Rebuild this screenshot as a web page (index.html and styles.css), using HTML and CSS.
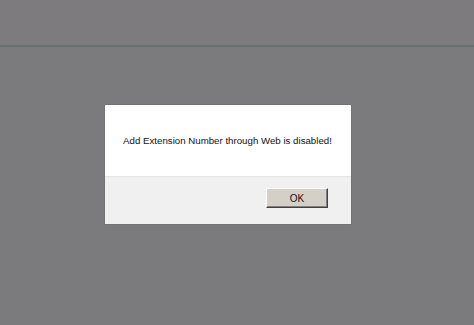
FILE: index.html
```html
<!DOCTYPE html>
<html>
<head>
<meta charset="utf-8">
<link rel="stylesheet" href="styles.css">
</head>
<body>
<div class="page">
  <div class="topbar"></div>
  <div class="content"></div>
</div>
<div class="dialog">
  <div class="dialog-body">
    <p class="message">Add Extension Number through Web is disabled!</p>
  </div>
  <div class="dialog-footer">
    <button class="ok-btn">OK</button>
  </div>
</div>
</body>
</html>
```

FILE: styles.css
```css
html, body {
  margin: 0;
  padding: 0;
  height: 100%;
}
body {
  background: #7b7b7d;
  font-family: Arial, "Liberation Sans", sans-serif;
  overflow: hidden;
}
.page {
  height: 100%;
  display: flex;
  flex-direction: column;
}
.topbar {
  height: 45px;
  background: #7d7b7d;
  border-bottom: 2px solid #66716c;
}
.content {
  flex: 1;
  background: #7b7b7d;
}
.dialog {
  position: absolute;
  left: 105px;
  top: 105px;
  width: 246px;
  height: 119px;
  background: #ffffff;
  display: flex;
  flex-direction: column;
  box-shadow: 0 0 1px rgba(0,0,0,0.4);
}
.dialog-body {
  height: 71px;
  display: flex;
  align-items: center;
  justify-content: center;
}
.message {
  margin: 0;
  padding-right: 1px;
  font-size: 9.7px;
  color: #111;
}
.dialog-footer {
  flex: 1;
  background: #f0f0f0;
  border-top: 1px solid #e4e4e4;
  display: flex;
  justify-content: flex-end;
  align-items: flex-start;
  padding: 11px 23px 0 0;
}
.ok-btn {
  width: 62px;
  height: 20px;
  padding: 0;
  background: #d4d0c8;
  border: 1px solid;
  border-color: #ffffff #404040 #404040 #ffffff;
  box-shadow: inset -1px -1px 0 #808080;
  font-family: Arial, "Liberation Sans", sans-serif;
  font-size: 10px;
  color: #111;
}
```
